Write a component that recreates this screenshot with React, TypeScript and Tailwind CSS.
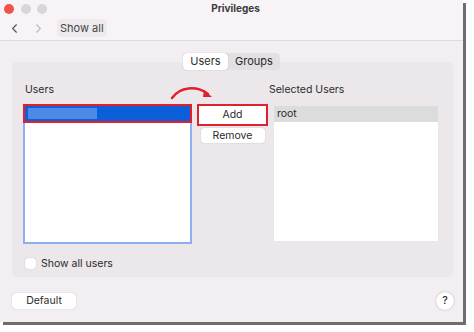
import { ChevronLeft, ChevronRight } from 'lucide-react'

const font = { fontFamily: 'Inter, "Liberation Sans", sans-serif' }

function RedArrow() {
    return (
        <svg className="absolute left-[148px] top-0" width="60" height="20" viewBox="0 0 60 20">
            <path d="M12 15 C 20 4, 36 2, 48 11" fill="none" stroke="#e0212b" strokeWidth="2.4" strokeLinecap="round" />
            <path d="M44 7 L 52 14 L 43 14 Z" fill="#e0212b" />
        </svg>
    )
}

export default function App() {
    return (
        <div className="w-[474px] h-[332px] bg-white overflow-hidden text-[#2b2b2b]" style={font}>
            {/* ── Window ─────────────────────────────────────────────── */}
            <div className="w-[463px] h-[322px] bg-[#f2eef1] flex flex-col shadow-[3px_3px_0_rgba(60,60,60,0.75)]">
                {/* title + toolbar */}
                <div className="h-[41px] bg-[#f7f3f6] border-b border-[#dedadd] flex flex-col">
                    <div className="h-[15px] grid grid-cols-[1fr_auto_1fr] items-center">
                        <div className="flex items-center gap-[6px] pl-[4px] pt-[1px]">
                            <span className="w-[10px] h-[10px] rounded-full bg-[#f0524f]" />
                            <span className="w-[10px] h-[10px] rounded-full bg-[#d9d5d8] ml-[1px]" />
                            <span className="w-[10px] h-[10px] rounded-full bg-[#d9d5d8]" />
                        </div>
                        <div className="text-[10px] font-bold text-[#3a3a3a] pt-[1px] pl-[8px]">Privileges</div>
                        <div />
                    </div>
                    <div className="flex items-center h-[22px] mt-[2px] pl-[7px]">
                        <ChevronLeft size={15} strokeWidth={1.8} className="text-[#555]" />
                        <ChevronRight size={15} strokeWidth={1.8} className="text-[#bbb] ml-[9px]" />
                        <div className="ml-[11px] h-[18px] px-[3px] rounded-[4px] bg-[#eeeaed] flex items-center text-[11px] text-[#454545]">
                            Show all
                        </div>
                    </div>
                </div>

                {/* content */}
                <div className="flex-1 flex flex-col pt-[12px] pl-[12px] pr-[10px]">
                    <div className="flex justify-center relative z-10 -mb-[8px] pr-[2px]">
                        <div className="flex h-[17px] rounded-[4px] bg-[#e3dfe2] text-[11px]">
                            <div className="w-[45px] bg-white rounded-[4px] shadow-[0_0_1px_rgba(0,0,0,0.35)] flex items-center justify-center">Users</div>
                            <div className="w-[52px] flex items-center justify-center">Groups</div>
                        </div>
                    </div>

                    <div className="h-[215px] bg-[#ebe7ea] rounded-[5px] flex flex-col pt-[21px] text-[10.5px]">
                        <div className="relative flex">
                            {/* users */}
                            <div className="flex flex-col ml-[11px] w-[169px]">
                                <div className="pl-[2px] h-[14px] leading-[14px]">Users</div>
                                <div className="mt-[7px] h-[140px] bg-white border-[2px] border-[#8eb0ee] flex flex-col">
                                    <div className="h-[19px] -mx-[2px] -mt-[2px] border-[2px] border-[#e0212b] bg-[#0d5fd9] flex items-center pl-[3px]">
                                        <div className="w-[69px] h-[11px] bg-[#4b8ae6]" />
                                    </div>
                                </div>
                            </div>

                            <RedArrow />

                            {/* buttons */}
                            <div className="flex flex-col items-center w-[71px] ml-[5px] pt-[21px]">
                                <div className="w-[71px] h-[22px] border-[2px] border-[#e0212b] bg-white flex items-center justify-center">
                                    Add
                                </div>
                                <div className="mt-[2px] w-[64px] h-[15px] rounded-[3px] bg-white shadow-[0_0_1px_rgba(0,0,0,0.35)] flex items-center justify-center">
                                    Remove
                                </div>
                            </div>

                            {/* selected */}
                            <div className="flex flex-col w-[170px] pl-[1px]">
                                <div className="h-[14px] leading-[14px]">Selected Users</div>
                                <div className="mt-[9px] ml-[5px] w-[164px] h-[135px] bg-white flex flex-col">
                                    <div className="h-[16px] bg-[#dcdcdc] flex items-center pl-[3px]">root</div>
                                </div>
                            </div>
                        </div>

                        <div className="mt-[12px] flex items-center pl-[13px]">
                            <div className="w-[11px] h-[11px] rounded-[3px] bg-white shadow-[0_0_1px_rgba(0,0,0,0.35)]" />
                            <span className="ml-[5px]">Show all users</span>
                        </div>
                    </div>
                </div>

                {/* footer */}
                <div className="h-[45px] flex items-start justify-between pl-[12px] pr-[9px] pt-[16px] text-[10.5px]">
                    <div className="w-[64px] h-[16px] rounded-[4px] bg-white shadow-[0_0_1px_rgba(0,0,0,0.35)] flex items-center justify-center">
                        Default
                    </div>
                    <div className="-mt-[1px] w-[18px] h-[18px] rounded-full bg-white shadow-[0_0_2px_rgba(0,0,0,0.3)] flex items-center justify-center font-medium">
                        ?
                    </div>
                </div>
            </div>
        </div>
    )
}
